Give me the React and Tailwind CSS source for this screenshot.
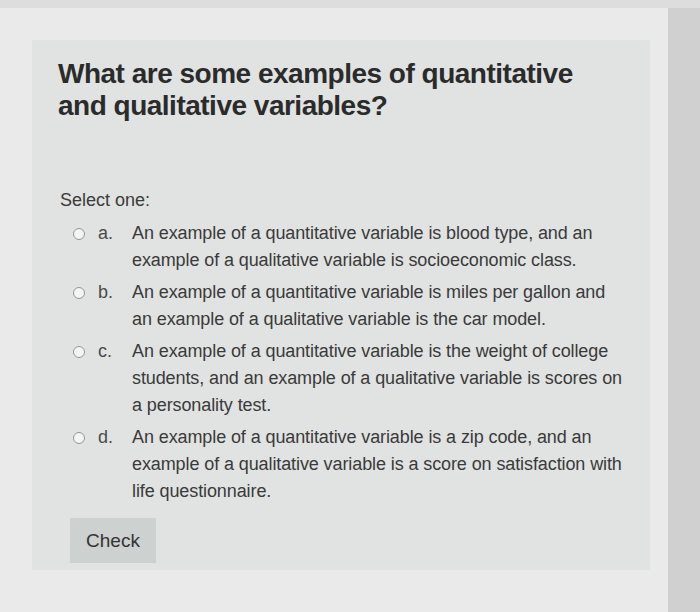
import React from "react";

const options = [
  { k: "a.", lines: ["An example of a quantitative variable is blood type, and an", "example of a qualitative variable is socioeconomic class."] },
  { k: "b.", lines: ["An example of a quantitative variable is miles per gallon and", "an example of a qualitative variable is the car model."] },
  { k: "c.", lines: ["An example of a quantitative variable is the weight of college", "students, and an example of a qualitative variable is scores on", "a personality test."] },
  { k: "d.", lines: ["An example of a quantitative variable is a zip code, and an", "example of a qualitative variable is a score on satisfaction with", "life questionnaire."] },
];

export default function App() {
  return (
    <div
      className="w-[700px] h-[612px] bg-[#e9eae9] flex flex-col overflow-hidden"
      style={{ fontFamily: '"Liberation Sans", Arial, sans-serif' }}
    >
      <div className="h-[8px] bg-[#dcdddc]" />
      <div className="flex flex-1">
        <div className="flex-1 pt-[32px] pl-[32px] pr-[18px]">
          <div className="bg-[#e1e3e2] h-[530px] pl-[26px] pr-[10px] pt-[18px]">
            <h1 className="text-[28px] leading-[32px] font-bold text-[#2b2b2b] tracking-[-0.5px]">
              What are some examples of quantitative
              <br />
              and qualitative variables?
            </h1>
            <div className="mt-[65px] text-[18px] leading-[27px] text-[#3a3a3a]">
              <div className="ml-[2px]">Select one:</div>
              <div className="mt-[6px] flex flex-col gap-[5px]">
                {options.map((o) => (
                  <div key={o.k} className="flex items-start">
                    <div className="w-[12px] h-[12px] rounded-full border border-[#949695] bg-[#f3f4f3] ml-[15px] mt-[8px] shrink-0" />
                    <div className="w-[47px] pl-[13px] shrink-0 text-[#4a4a4a]">{o.k}</div>
                    <div className="tracking-[-0.1px] whitespace-nowrap">
                      {o.lines.map((l, i) => (
                        <div key={i}>{l}</div>
                      ))}
                    </div>
                  </div>
                ))}
              </div>
              <div className="mt-[13px] ml-[12px] w-[86px] h-[45px] bg-[#cdd1d0] flex items-center justify-center text-[19px] text-[#333]">
                Check
              </div>
            </div>
          </div>
        </div>
        <div className="w-[32px] bg-[#cfd0cf]" />
      </div>
    </div>
  );
}
